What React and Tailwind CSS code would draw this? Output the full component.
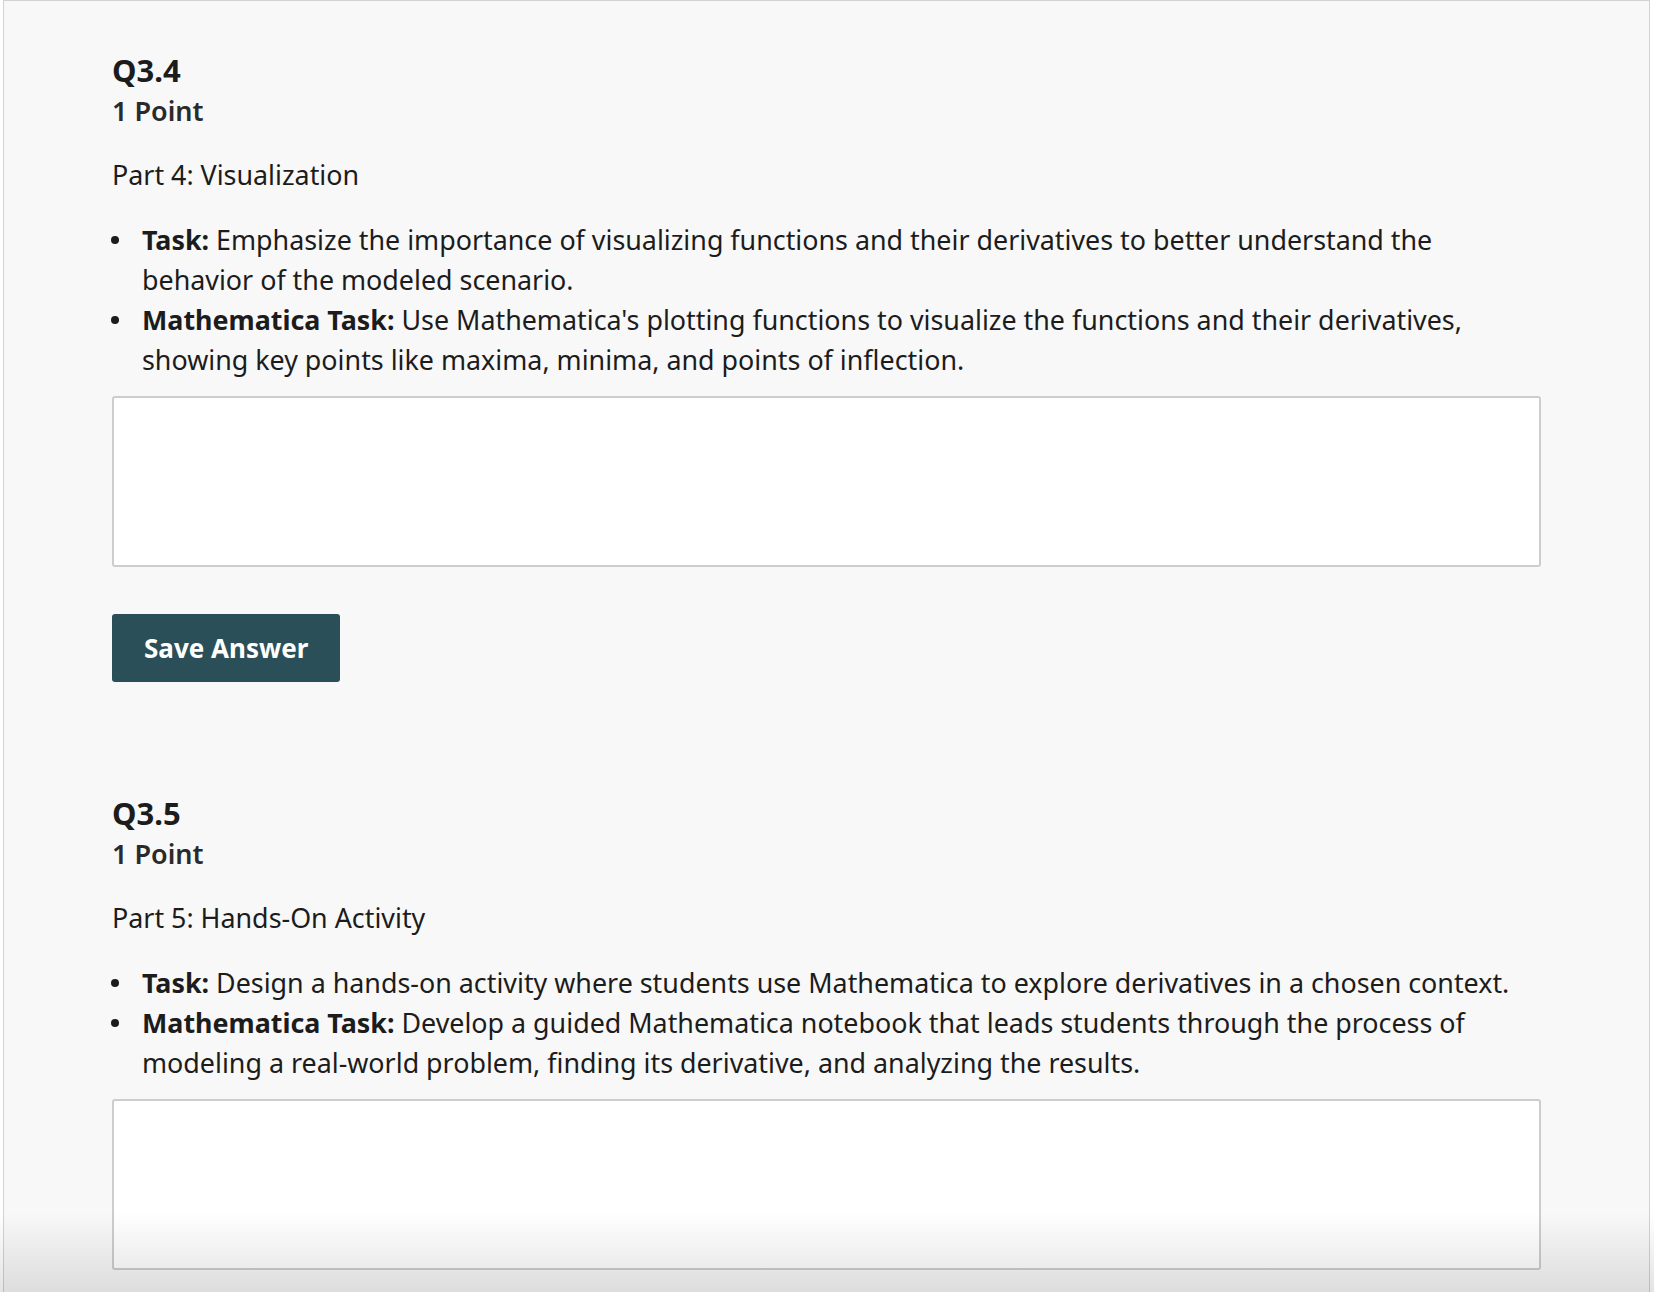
const questions = [
  {
    id: 'Q3.4',
    points: '1 Point',
    part: 'Part 4: Visualization',
    items: [
      {
        label: 'Task:',
        text: ' Emphasize the importance of visualizing functions and their derivatives to better understand the behavior of the modeled scenario.',
      },
      {
        label: 'Mathematica Task:',
        text: " Use Mathematica's plotting functions to visualize the functions and their derivatives, showing key points like maxima, minima, and points of inflection.",
      },
    ],
  },
  {
    id: 'Q3.5',
    points: '1 Point',
    part: 'Part 5: Hands-On Activity',
    items: [
      {
        label: 'Task:',
        text: ' Design a hands-on activity where students use Mathematica to explore derivatives in a chosen context.',
      },
      {
        label: 'Mathematica Task:',
        text: ' Develop a guided Mathematica notebook that leads students through the process of modeling a real-world problem, finding its derivative, and analyzing the results.',
      },
    ],
  },
];

const Question = ({ q, last }) => (
  <section className={last ? '' : 'mb-[111px]'}>
    {/* Header */}
    <h3 className="text-[31px] font-bold leading-[41px] text-[#1c1c1c]">{q.id}</h3>
    <div className="text-[27px] font-semibold leading-[40px] text-[#2a2a2a]">{q.points}</div>

    <p className="mt-[24px] text-[26.85px] leading-[40px]">{q.part}</p>

    <ul className="mt-[25px]">
      {q.items.map((item) => (
        <li key={item.label} className="flex items-start text-[26.85px] leading-[40px]">
          <span className="flex h-[40px] w-[30px] shrink-0 items-center">
            <span className="-ml-px block h-[8px] w-[8px] rounded-full bg-[#1c1c1c]" />
          </span>
          <span>
            <strong className="font-bold">{item.label}</strong>
            {item.text}
          </span>
        </li>
      ))}
    </ul>

    <textarea
      className="mt-[16px] block h-[171px] w-full resize-none rounded-[3px] border-2 border-[#cdcdcd] bg-white"
      aria-label={`${q.id} answer`}
    />

    {!last && (
      <button className="mt-[47px] h-[68px] rounded-[3px] bg-[#2b4f59] px-[32px] text-[26px] font-bold text-white">
        Save Answer
      </button>
    )}
  </section>
);

export default function App() {
  return (
    <div
      className="relative h-[1292px] overflow-hidden bg-white"
      style={{ fontFamily: '"Noto Sans", "Open Sans", sans-serif' }}
    >
      <div className="ml-[3px] h-full w-[1647px] border-x-[1.5px] border-t border-[#d2d2d2] bg-[#f8f8f8] text-[#1c1c1c]">
        <div className="pl-[108px] pr-[108px] pt-[49px]">
          {questions.map((q, i) => (
            <Question key={q.id} q={q} last={i === questions.length - 1} />
          ))}
        </div>
      </div>

      {/* bottom fade */}
      <div className="pointer-events-none absolute bottom-0 left-0 h-[80px] w-full bg-gradient-to-b from-transparent to-[rgba(0,0,0,0.11)]" />
    </div>
  );
}
